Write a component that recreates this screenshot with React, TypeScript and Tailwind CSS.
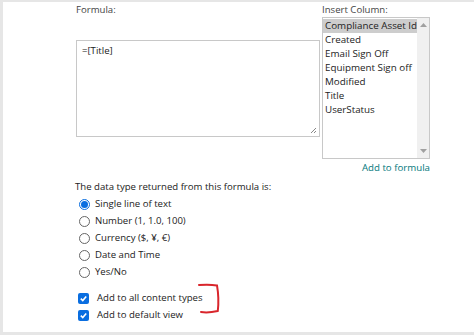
import React from "react";

const columns = [
  "Compliance Asset Id",
  "Created",
  "Email Sign Off",
  "Equipment Sign off",
  "Modified",
  "Title",
  "UserStatus",
];

const types = [
  "Single line of text",
  "Number (1, 1.0, 100)",
  "Currency ($, ¥, €)",
  "Date and Time",
  "Yes/No",
];

const Check = () => (
  <span className="flex h-[11px] w-[11px] items-center justify-center rounded-[2px] bg-[#0a6ee0]">
    <svg width="9" height="9" viewBox="0 0 10 10">
      <path d="M2 5.2 L4.2 7.3 L8 2.8" fill="none" stroke="#fff" strokeWidth="1.8" />
    </svg>
  </span>
);

export default function App() {
  return (
    <div
      className="relative h-[335px] w-[474px] overflow-hidden border-t-2 border-b-[3px] border-l-[3px] border-[#e6e6e6] bg-white text-[9.6px] text-[#222]"
      style={{ fontFamily: '"Open Sans", "Noto Sans", sans-serif' }}
    >
      {/* top: formula + insert column */}
      <div className="flex pl-[73px] pt-[1px]">
        <div className="flex w-[246px] flex-col">
          <div className="h-[14px] leading-[14px] text-[#444]">Formula:</div>
          <div className="relative mt-[23px] h-[97px] w-[244px] border border-[#c8c8c8] px-[5px] py-[3px]">
            =[Title]
            <svg className="absolute bottom-[2px] right-[2px]" width="7" height="7" viewBox="0 0 7 7">
              <path d="M1 6 L6 1 M4 6 L6 4" stroke="#888" strokeWidth="1" />
            </svg>
          </div>
        </div>
        <div className="flex w-[108px] flex-col">
          <div className="h-[14px] leading-[14px] text-[#444]">Insert Column:</div>
          <div className="flex h-[142px] w-[108px] border border-[#c8c8c8] text-[9.8px]">
            <div className="flex flex-1 flex-col pt-[1px]">
              {columns.map((c, i) => (
                <div
                  key={c}
                  className={`h-[14px] whitespace-nowrap pl-[2px] leading-[14px] ${i === 0 ? "bg-[#cdcdcd]" : ""}`}
                >
                  {c}
                </div>
              ))}
            </div>
            <div className="flex w-[13px] flex-col items-center justify-between bg-[#f0f0f0] py-[5px]">
              <svg width="7" height="4" viewBox="0 0 7 4">
                <path d="M0 4 L3.5 0 L7 4 Z" fill="#a0a0a0" />
              </svg>
              <svg width="7" height="4" viewBox="0 0 7 4">
                <path d="M0 0 L3.5 4 L7 0 Z" fill="#a0a0a0" />
              </svg>
            </div>
          </div>
          <div className="mt-[1px] text-right text-[9.7px] leading-[16px] text-[#03787c]">Add to formula</div>
        </div>
      </div>

      {/* data type */}
      <div className="mt-[3px] pl-[72px] leading-[16px]">The data type returned from this formula is:</div>
      <div className="flex flex-col pl-[76px] pt-[1px]">
        {types.map((t, i) => (
          <div key={t} className="flex h-[17px] items-center gap-[5px]">
            {i === 0 ? (
              <span className="flex h-[11px] w-[11px] items-center justify-center rounded-full border border-[#0a6ee0]">
                <span className="h-[7px] w-[7px] rounded-full bg-[#0a6ee0]" />
              </span>
            ) : (
              <span className="h-[11px] w-[11px] rounded-full border border-[#666]" />
            )}
            <span>{t}</span>
          </div>
        ))}
      </div>

      {/* checkboxes */}
      <div className="mt-[9px] flex flex-col pl-[75px]">
        <div className="flex h-[17px] items-center gap-[8px]">
          <Check />
          <span>Add to all content types</span>
        </div>
        <div className="flex h-[17px] items-center gap-[8px]">
          <Check />
          <span>Add to default view</span>
        </div>
      </div>

      {/* red annotation bracket */}
      <svg className="absolute left-[193px] top-[280px]" width="30" height="34" viewBox="0 0 30 34">
        <path
          d="M3 3 C10 2.5 17 2.8 21 3.4 C22.5 12 22.6 22 21.8 29 C15 30.5 9 30.6 5 30"
          fill="none"
          stroke="#d9262c"
          strokeWidth="2"
          strokeLinecap="round"
        />
      </svg>
    </div>
  );
}
